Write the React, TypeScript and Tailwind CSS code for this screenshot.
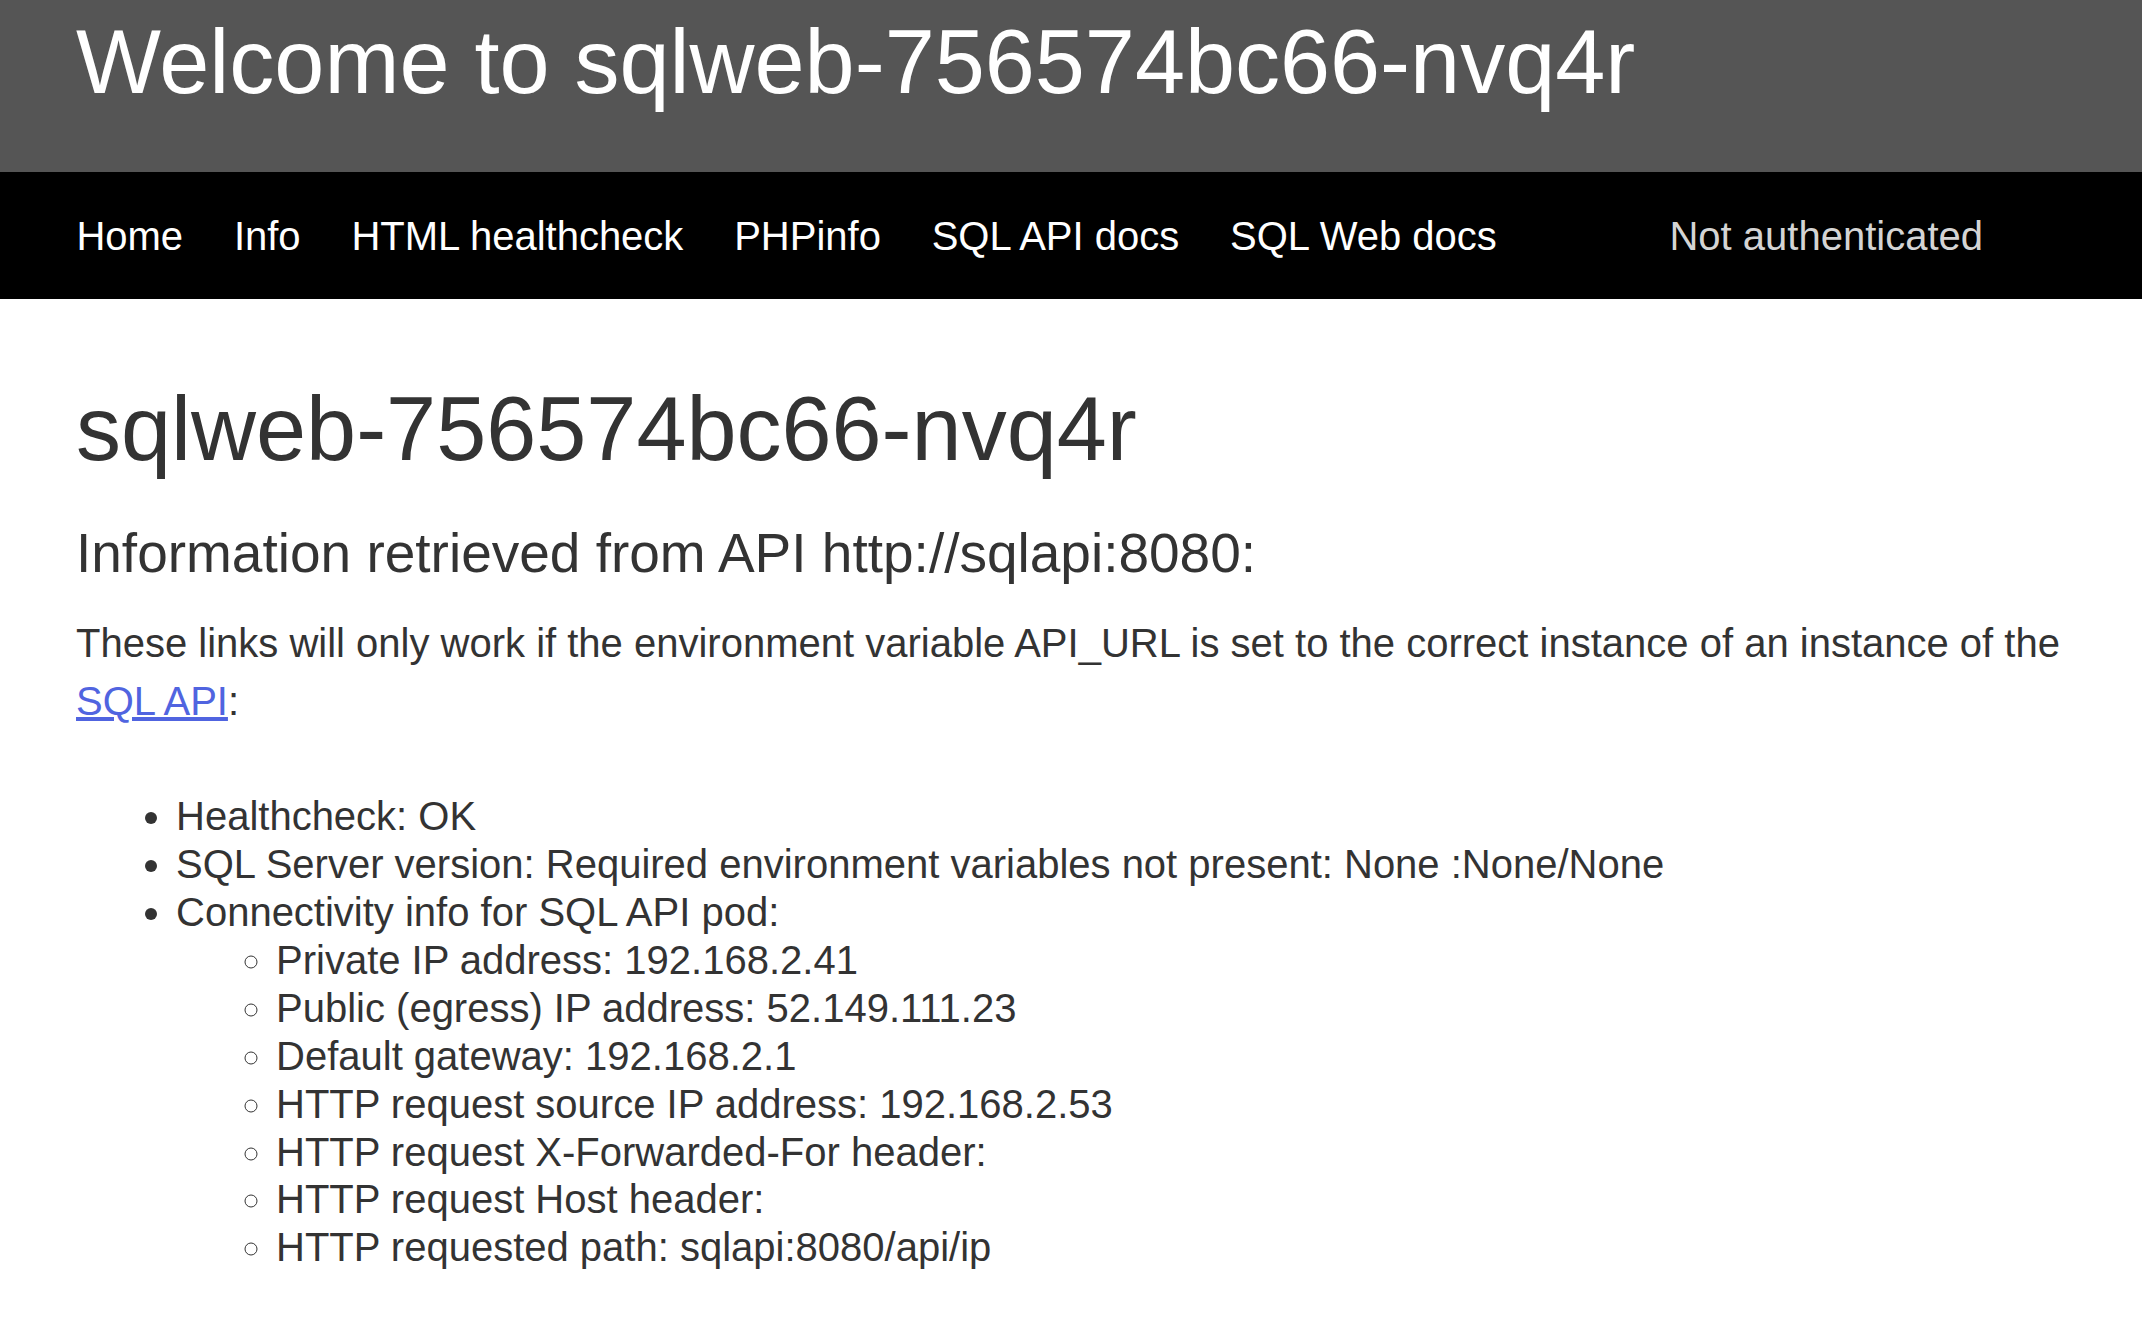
import React from 'react';

const navLinks = ['Home', 'Info', 'HTML healthcheck', 'PHPinfo', 'SQL API docs', 'SQL Web docs'];

const podInfo = [
  'Private IP address: 192.168.2.41',
  'Public (egress) IP address: 52.149.111.23',
  'Default gateway: 192.168.2.1',
  'HTTP request source IP address: 192.168.2.53',
  'HTTP request X-Forwarded-For header:',
  'HTTP request Host header:',
  'HTTP requested path: sqlapi:8080/api/ip',
];

export default function App() {
  return (
    <div className="min-h-screen bg-white font-['Liberation_Sans',Arial,sans-serif]">
      {/* header */}
      <header className="h-[172px] bg-[#555555] pl-[76px] pt-[17px]">
        <h1 className="text-[90px] leading-[90px] text-white">Welcome to sqlweb-756574bc66-nvq4r</h1>
      </header>

      {/* nav bar */}
      <nav className="flex h-[127px] items-center bg-black pl-[51px]">
        {navLinks.map((link) => (
          <a key={link} href="#" className="px-[25.4px] text-[40px] leading-[60px] whitespace-nowrap text-white">
            {link}
          </a>
        ))}
        <span className="ml-auto mr-[133px] px-[26px] text-[40px] leading-[60px] whitespace-nowrap text-[#d4d4d4]">
          Not authenticated
        </span>
      </nav>

      <main className="pl-[76px] pr-[30px] text-[#333333]">
        <h2 className="mt-[85px] text-[90px] leading-[90px]">sqlweb-756574bc66-nvq4r</h2>
        <h3 className="mt-[52px] text-[55px] leading-[55px]">Information retrieved from API http://sqlapi:8080:</h3>
        <p className="mt-[33px] text-[40px] leading-[58px]">
          These links will only work if the environment variable API_URL is set to the correct instance of an instance of the{' '}
          <a href="#" className="text-[#5064e0] underline">SQL API</a>:
        </p>

        <ul className="mt-[63px] list-disc pl-[100px] text-[40px] leading-[47.8px]">
          <li>Healthcheck: OK</li>
          <li>SQL Server version: Required environment variables not present: None :None/None</li>
          <li>
            Connectivity info for SQL API pod:
            <ul className="mt-[1px] list-[circle] pl-[100px]">
              {podInfo.map((item) => (
                <li key={item}>{item}</li>
              ))}
            </ul>
          </li>
        </ul>
      </main>
    </div>
  );
}
